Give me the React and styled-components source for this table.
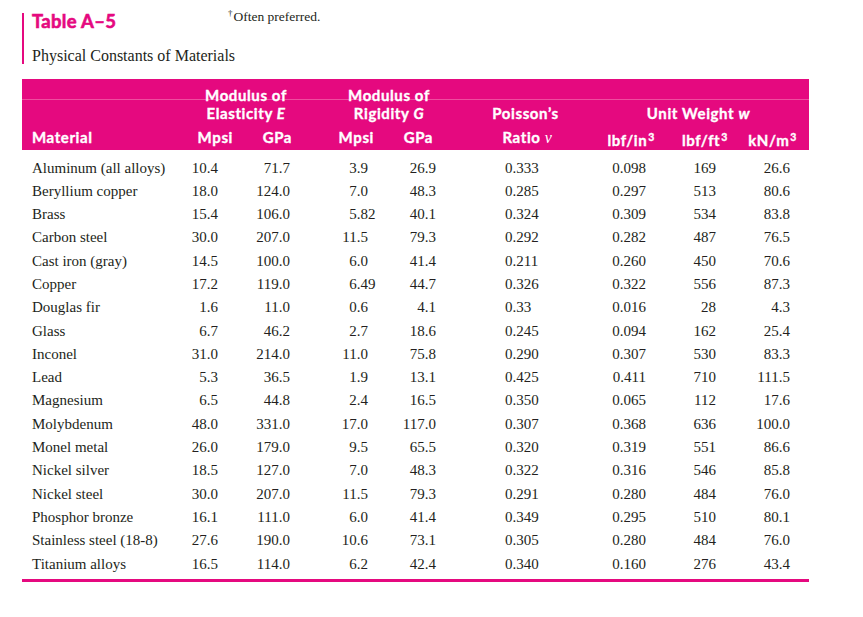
import React from "react";
import styled, { createGlobalStyle } from "styled-components";

const PINK = "#e5097f";
const INK = "#231f20";

const Global = createGlobalStyle`
  html, body { margin: 0; padding: 0; background: #fff; }
  body { font-family: "Liberation Serif", "Times New Roman", serif; color: ${INK}; }
`;

const HEAD_COLS = "153px 58px 59px 82px 59px 167px 55px 73px 69px 12px";
const DATA_COLS = "153px 43px 72px 78px 68px 124px 86px 70px 74px 19px";

const Page = styled.div`
  width: 863px;
  height: 617px;
  box-sizing: border-box;
  padding: 13px 0 0 22px;
  overflow: hidden;
`;

const Caption = styled.header`
  width: 340px;
  border-left: 2px solid ${PINK};
  padding-left: 8px;
`;

const TitleRow = styled.div`
  display: grid;
  grid-template-columns: 196px auto;
  align-items: start;
  height: 16px;
`;

const Title = styled.h1`
  margin: 0;
  font-family: Lato, "Noto Sans", sans-serif;
  font-weight: 700;
  font-size: 18.5px;
  line-height: 16px;
  color: ${PINK};
  letter-spacing: 0.3px;
  -webkit-text-stroke: 0.6px ${PINK};
`;

const Footnote = styled.p`
  margin: -6px 0 0;
  font-size: 13.5px;
  line-height: 13px;
  white-space: nowrap;
`;

const Dagger = styled.span`
  font-size: 9px;
  vertical-align: 5px;
  margin-right: 1px;
`;

const Subtitle = styled.h2`
  margin: 19px 0 0;
  font-weight: 400;
  font-size: 16px;
  line-height: 16px;
`;

const Table = styled.section`
  width: 787px;
  margin-top: 15px;
  border-bottom: 3px solid ${PINK};
`;

const HeadGrid = styled.div`
  display: grid;
  grid-template-columns: ${HEAD_COLS};
  grid-template-rows: 18px 24px 18px;
  padding: 7px 0 4px;
  background: linear-gradient(
    to bottom,
    ${PINK} 0 20px,
    #ef4d9f 20px 21px,
    ${PINK} 21px 100%
  );
  color: #fff;
  font-family: Lato, "Noto Sans", sans-serif;
  font-weight: 700;
  font-size: 15px;
  line-height: 18px;
  letter-spacing: 0.6px;
  -webkit-text-stroke: 0.35px #fff;
`;

const HCell = styled.div`
  grid-column: ${(p) => p.$col};
  grid-row: ${(p) => p.$row};
  text-align: ${(p) => p.$align || "left"};
  padding-left: ${(p) => p.$pl || 0}px;
  white-space: nowrap;
`;

const Ital = styled.i`
  font-style: italic;
`;

const Nu = styled.i`
  font-family: "Liberation Serif", serif;
  font-weight: 400;
  font-style: italic;
  font-size: 16px;
  -webkit-text-stroke: 0;
`;

const Sup = styled.span`
  font-size: 10.5px;
  vertical-align: 5px;
  margin-left: 1px;
`;

const Body = styled.div`
  padding: 6.5px 0 3px;
`;

const Row = styled.div`
  display: grid;
  grid-template-columns: ${DATA_COLS};
  height: 23.3px;
  line-height: 23.3px;
  font-size: 15px;
  white-space: nowrap;
`;

const Cell = styled.div`
  text-align: ${(p) => p.$align || "right"};
  padding-left: ${(p) => p.$pl || 0}px;
`;

const Num = styled.span`
  margin-right: ${(p) => (p.$hang ? "-0.5em" : "0")};
`;

const rows = [
  ["Aluminum (all alloys)", "10.4", "71.7", "3.9", "26.9", "0.333", "0.098", "169", "26.6"],
  ["Beryllium copper", "18.0", "124.0", "7.0", "48.3", "0.285", "0.297", "513", "80.6"],
  ["Brass", "15.4", "106.0", "5.82", "40.1", "0.324", "0.309", "534", "83.8"],
  ["Carbon steel", "30.0", "207.0", "11.5", "79.3", "0.292", "0.282", "487", "76.5"],
  ["Cast iron (gray)", "14.5", "100.0", "6.0", "41.4", "0.211", "0.260", "450", "70.6"],
  ["Copper", "17.2", "119.0", "6.49", "44.7", "0.326", "0.322", "556", "87.3"],
  ["Douglas fir", "1.6", "11.0", "0.6", "4.1", "0.33", "0.016", "28", "4.3"],
  ["Glass", "6.7", "46.2", "2.7", "18.6", "0.245", "0.094", "162", "25.4"],
  ["Inconel", "31.0", "214.0", "11.0", "75.8", "0.290", "0.307", "530", "83.3"],
  ["Lead", "5.3", "36.5", "1.9", "13.1", "0.425", "0.411", "710", "111.5"],
  ["Magnesium", "6.5", "44.8", "2.4", "16.5", "0.350", "0.065", "112", "17.6"],
  ["Molybdenum", "48.0", "331.0", "17.0", "117.0", "0.307", "0.368", "636", "100.0"],
  ["Monel metal", "26.0", "179.0", "9.5", "65.5", "0.320", "0.319", "551", "86.6"],
  ["Nickel silver", "18.5", "127.0", "7.0", "48.3", "0.322", "0.316", "546", "85.8"],
  ["Nickel steel", "30.0", "207.0", "11.5", "79.3", "0.291", "0.280", "484", "76.0"],
  ["Phosphor bronze", "16.1", "111.0", "6.0", "41.4", "0.349", "0.295", "510", "80.1"],
  ["Stainless steel (18-8)", "27.6", "190.0", "10.6", "73.1", "0.305", "0.280", "484", "76.0"],
  ["Titanium alloys", "16.5", "114.0", "6.2", "42.4", "0.340", "0.160", "276", "43.4"],
];

export default function App() {
  return (
    <>
      <Global />
      <Page>
        <Caption>
          <TitleRow>
            <Title>Table A–5</Title>
            <Footnote>
              <Dagger>†</Dagger>Often preferred.
            </Footnote>
          </TitleRow>
          <Subtitle>Physical Constants of Materials</Subtitle>
        </Caption>

        <Table>
          <HeadGrid>
            <HCell $col="2 / 4" $row="1" $align="center" $pl={25}>Modulus of</HCell>
            <HCell $col="2 / 4" $row="2" $align="center" $pl={25}>
              Elasticity <Ital>E</Ital>
            </HCell>
            <HCell $col="4 / 6" $row="1" $align="center" $pl={53}>Modulus of</HCell>
            <HCell $col="4 / 6" $row="2" $align="center" $pl={53}>
              Rigidity <Ital>G</Ital>
            </HCell>
            <HCell $col="6" $row="2" $align="center" $pl={18}>Poisson’s</HCell>
            <HCell $col="6" $row="3" $align="center" $pl={22}>
              Ratio <Nu>ν</Nu>
            </HCell>
            <HCell $col="7 / 10" $row="2" $align="center">
              Unit Weight <Ital>w</Ital>
            </HCell>
            <HCell $col="1" $row="3" $pl={10}>Material</HCell>
            <HCell $col="2" $row="3" $align="right">Mpsi</HCell>
            <HCell $col="3" $row="3" $align="right">GPa</HCell>
            <HCell $col="4" $row="3" $align="right">Mpsi</HCell>
            <HCell $col="5" $row="3" $align="right">GPa</HCell>
            <HCell $col="7" $row="3" $align="right">
              lbf/in<Sup>3</Sup>
            </HCell>
            <HCell $col="8" $row="3" $align="right">
              lbf/ft<Sup>3</Sup>
            </HCell>
            <HCell $col="9" $row="3" $align="right">
              kN/m<Sup>3</Sup>
            </HCell>
          </HeadGrid>

          <Body>
            {rows.map((r) => (
              <Row key={r[0]}>
                <Cell $align="left" $pl={10}>{r[0]}</Cell>
                <Cell>{r[1]}</Cell>
                <Cell>{r[2]}</Cell>
                <Cell>
                  <Num $hang={r[3].split(".")[1].length > 1}>{r[3]}</Num>
                </Cell>
                <Cell>{r[4]}</Cell>
                <Cell $align="left" $pl={69}>{r[5]}</Cell>
                <Cell>{r[6]}</Cell>
                <Cell>{r[7]}</Cell>
                <Cell>{r[8]}</Cell>
                <Cell />
              </Row>
            ))}
          </Body>
        </Table>
      </Page>
    </>
  );
}
